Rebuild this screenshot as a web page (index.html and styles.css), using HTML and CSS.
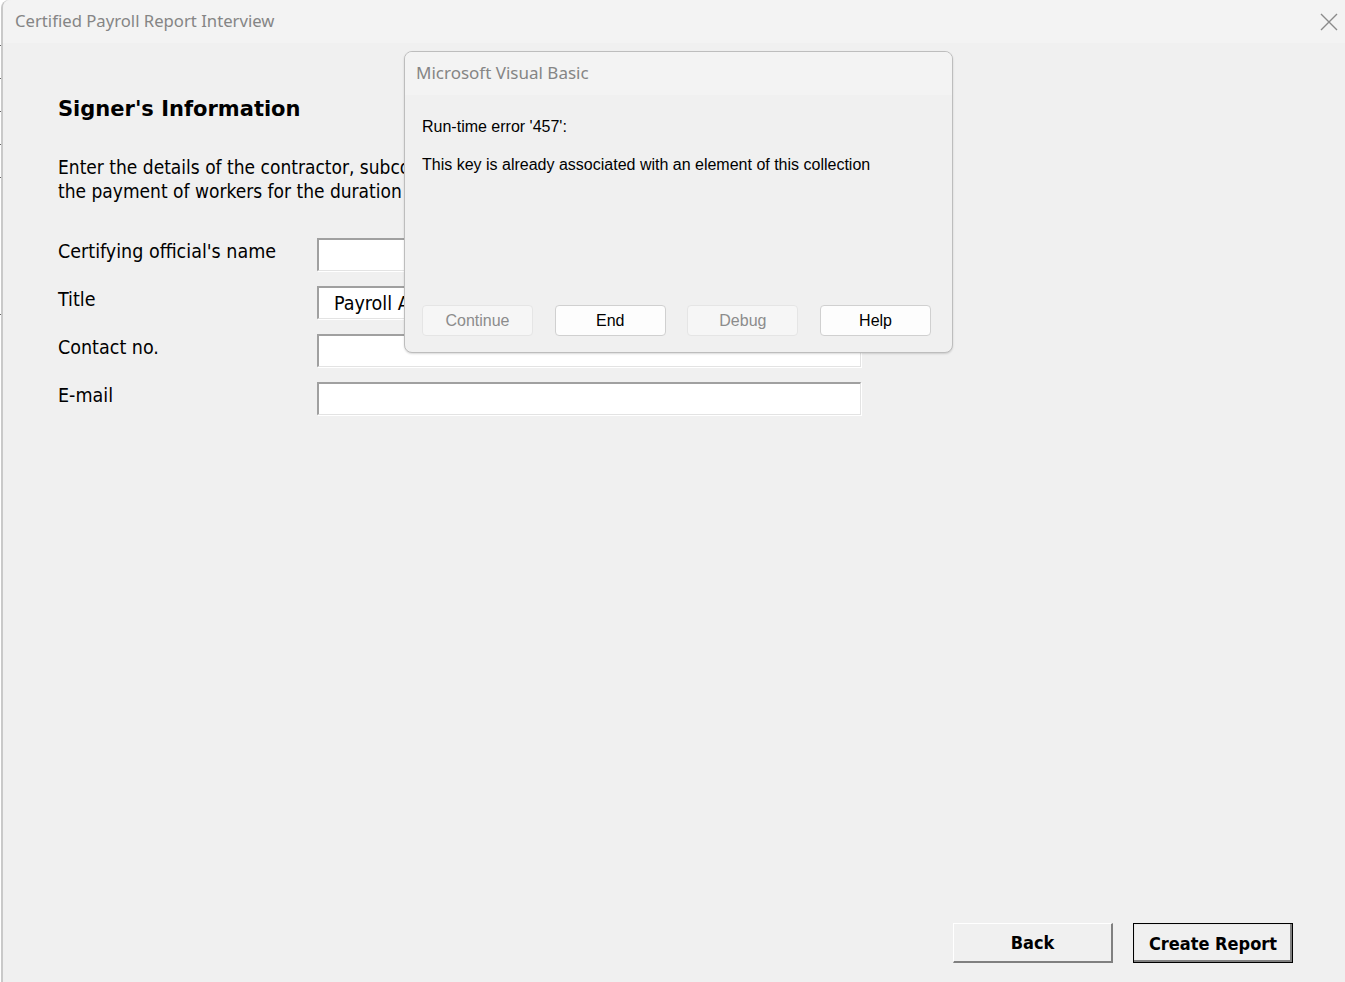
FILE: index.html
```html
<!DOCTYPE html>
<html lang="en">
  <head>
    <meta charset="UTF-8" />
    <title>Certified Payroll Report Interview</title>
    <link rel="stylesheet" href="styles.css">
  </head>
  <body>
    <div class="sheet-edge"></div>

    <div class="window">
      <div class="titlebar">
        <span class="titlebar-text">Certified Payroll Report Interview</span>
        <svg class="close-icon" width="18" height="18" viewBox="0 0 18 18">
          <path d="M1 1 L17 17 M17 1 L1 17" stroke="#8a8a8a" stroke-width="1.4" fill="none" />
        </svg>
      </div>

      <div class="form-body">
        <h1 class="form-heading">Signer's Information</h1>
        <p class="form-intro">
          Enter the details of the contractor, subcontractor or official who supervises<br />
          the payment of workers for the duration of the project.
        </p>

        <div class="field-list">
          <div class="field-row">
            <label for="official-name">Certifying official's name</label>
            <input type="text" id="official-name" />
          </div>
          <div class="field-row">
            <label for="official-title">Title</label>
            <input type="text" id="official-title" value="Payroll Administrator" />
          </div>
          <div class="field-row">
            <label for="contact-no">Contact no.</label>
            <input type="text" id="contact-no" />
          </div>
          <div class="field-row">
            <label for="email">E-mail</label>
            <input type="text" id="email" />
          </div>
        </div>

        <div class="form-actions">
          <button class="classic-btn">Back</button>
          <button class="classic-btn default-btn">Create Report</button>
        </div>
      </div>

      <div class="vb-dialog">
        <div class="vb-title">Microsoft Visual Basic</div>
        <div class="vb-body">
          <p class="vb-error">Run-time error '457':</p>
          <p class="vb-message">This key is already associated with an element of this collection</p>
        </div>
        <div class="vb-buttons">
          <button class="vb-btn" disabled>Continue</button>
          <button class="vb-btn">End</button>
          <button class="vb-btn" disabled>Debug</button>
          <button class="vb-btn">Help</button>
        </div>
      </div>
    </div>
  </body>
</html>
```
FILE: styles.css
```css
body {
  margin: 0;
  padding: 0;
  background: #fff;
  height: 982px;
  display: flex;
  overflow: hidden;
}

/* edge of the spreadsheet behind the form */
.sheet-edge {
  width: 1px;
  flex-shrink: 0;
  background: linear-gradient(to bottom,
    #fff 0, #fff 45px, #666 45px, #666 46px,
    #fff 46px, #fff 78px, #666 78px, #666 79px,
    #fff 79px, #fff 111px, #666 111px, #666 112px,
    #fff 112px, #fff 144px, #666 144px, #666 145px,
    #fff 145px, #fff 177px, #666 177px, #666 178px,
    #fff 178px, #fff 314px, #666 314px, #666 315px,
    #fff 315px);
}

.window {
  position: relative;
  flex-grow: 1;
  display: flex;
  flex-direction: column;
  background: #f0f0f0;
  border-left: 2px solid #c9c9c9;
  border-top-left-radius: 8px;
}

.titlebar {
  height: 43px;
  flex-shrink: 0;
  background: #f3f3f3;
  display: flex;
  align-items: center;
  justify-content: space-between;
  padding: 0 7px 0 12px;
  border-top-left-radius: 8px;
}

.titlebar-text {
  font-family: 'Noto Sans', 'Open Sans', sans-serif;
  font-size: 16.7px;
  color: #858585;
  padding-bottom: 2px;
}

.form-body {
  flex-grow: 1;
  display: flex;
  flex-direction: column;
  padding: 0 0 0 55px;
  font-family: 'DejaVu Sans', sans-serif;
  color: #000;
}

.form-heading {
  margin: 52px 0 0;
  font-size: 21px;
  font-weight: bold;
  line-height: 28px;
}

.form-intro {
  margin: 32px 0 0;
  font-size: 19px;
  font-stretch: semi-condensed;
  line-height: 24px;
  white-space: nowrap;
}

.field-list {
  margin-top: 35px;
  display: flex;
  flex-direction: column;
  gap: 15px;
}

.field-row {
  display: flex;
  align-items: flex-start;
}

.field-row label {
  width: 259px;
  font-size: 19.5px;
  font-stretch: semi-condensed;
  line-height: 27px;
}

.field-row input {
  width: 526px;
  height: 30px;
  box-sizing: content-box;
  padding: 0 0 0 15px;
  margin: 0;
  border-style: solid;
  border-width: 2px 1px 1px 2px;
  border-color: #a0a0a0 #e3e3e3 #e3e3e3 #a0a0a0;
  box-shadow: 1px 1px 0 #fff;
  background: #fff;
  font-family: 'DejaVu Sans', sans-serif;
  font-stretch: semi-condensed;
  font-size: 19.5px;
  color: #000;
  outline: none;
}

.form-actions {
  margin-top: auto;
  margin-bottom: 19px;
  align-self: flex-end;
  margin-right: 52px;
  display: flex;
  gap: 20px;
}

.classic-btn {
  width: 160px;
  height: 40px;
  box-sizing: border-box;
  background: #f0f0f0;
  border-style: solid;
  border-width: 1px 2px 2px 1px;
  border-color: #fff #808080 #808080 #fff;
  font-family: 'DejaVu Sans', sans-serif;
  font-stretch: semi-condensed;
  font-size: 18px;
  font-weight: bold;
  color: #000;
  padding: 0;
}

.default-btn {
  border: 1px solid #000;
  box-shadow: inset -2px -2px 0 #808080, inset 1px 1px 0 #e8e8e8;
}

.vb-dialog {
  position: absolute;
  left: 401px;
  top: 51px;
  width: 547px;
  height: 300px;
  background: #f0f0f0;
  border: 1px solid #bdbdbd;
  border-radius: 8px;
  box-shadow: 0 1px 2px rgba(0, 0, 0, 0.15);
  overflow: hidden;
  display: flex;
  flex-direction: column;
  font-family: 'Liberation Sans', sans-serif;
}

.vb-title {
  height: 43px;
  background: #f3f3f3;
  display: flex;
  align-items: center;
  padding: 0 0 3px 11px;
  box-sizing: border-box;
  font-family: 'Noto Sans', 'Open Sans', sans-serif;
  font-size: 17px;
  color: #858585;
}

.vb-body {
  flex-grow: 1;
  padding: 23px 0 0 17px;
  font-size: 16px;
  color: #000;
}

.vb-body p {
  margin: 0 0 20px;
}

.vb-buttons {
  display: flex;
  gap: 21.7px;
  padding: 0 0 16px 17px;
}

.vb-btn {
  width: 111px;
  height: 31px;
  background: #fdfdfd;
  border: 1px solid #d0d0d0;
  border-radius: 4px;
  font-family: 'Liberation Sans', sans-serif;
  font-size: 16px;
  color: #000;
  padding: 0;
}

.vb-btn:disabled {
  background: #f6f6f6;
  border-color: #e5e5e5;
  color: #8c8c8c;
}
```
